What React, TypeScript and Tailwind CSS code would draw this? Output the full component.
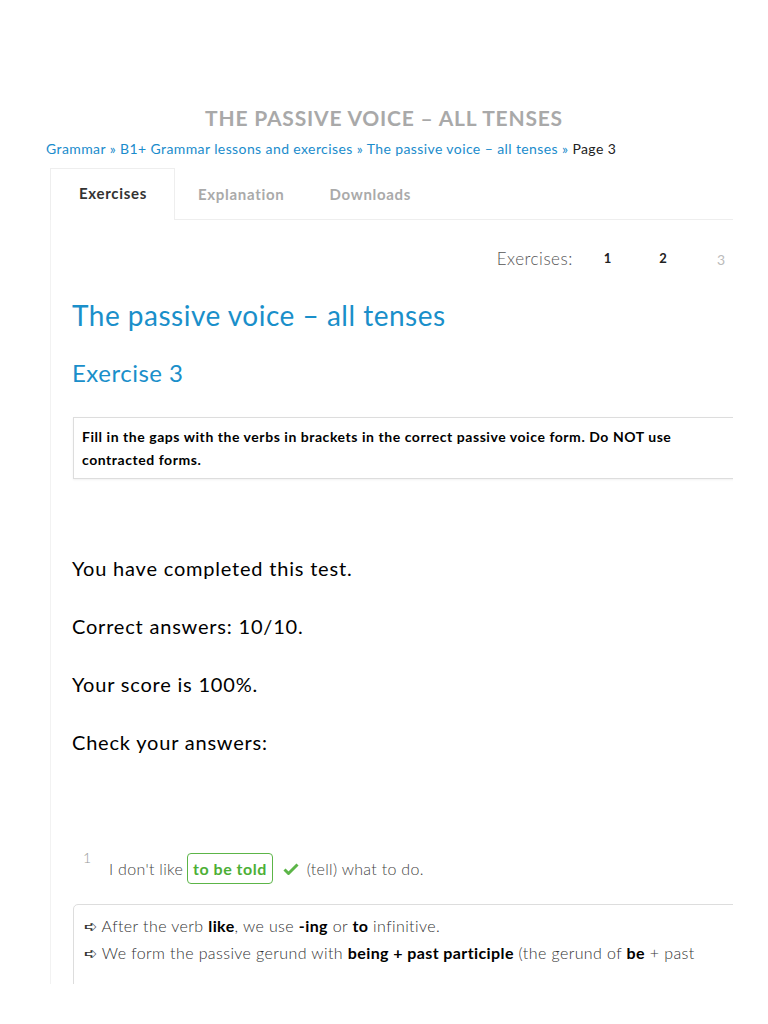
import React from "react";

const font = { fontFamily: "Lato, 'Open Sans', sans-serif" };

export default function App() {
  return (
    <div className="w-[768px] h-[1024px] bg-white overflow-hidden text-[#222]" style={font}>
      <div className="h-[984px] overflow-hidden pt-[105px]">
        <h2 className="text-center text-[21px] leading-[26px] font-bold text-[#a9a9a9] tracking-[0.8px]">
          THE PASSIVE VOICE – ALL TENSES
        </h2>
        <div className="mt-[9px] pl-[46px] text-[14px] leading-[18px] text-[#1a8ccc] tracking-[0.4px]">
          <span>Grammar</span> » <span>B1+ Grammar lessons and exercises</span> »{" "}
          <span>The passive voice – all tenses</span> » <span className="text-[#222]">Page 3</span>
        </div>
        <div className="ml-[50px] w-[683px] overflow-hidden mt-[10px]">
          {/* tabs */}
          <div className="flex h-[52px]">
            <div className="w-[125px] border border-b-0 border-[#eeeeee] pt-[14px] pl-[28px] text-[15px] leading-[20px] font-bold text-[#333] tracking-[0.7px]">
              Exercises
            </div>
            <div className="flex-1 flex items-start pt-[16px] border-b border-[#eeeeee] text-[15px] leading-[20px] font-bold text-[#aaaaaa] tracking-[0.7px]">
              <span className="ml-[23px]">Explanation</span>
              <span className="ml-[45px]">Downloads</span>
            </div>
          </div>
          {/* panel */}
          <div className="border-l border-[#f2f2f2] pb-[40px]">
            <div className="flex justify-end items-center h-[74px] pt-[4px] pr-[8px]">
              <span className="text-[17px] font-light text-[#555] tracking-[0.5px]">Exercises:</span>
              <span className="ml-[31px] text-[13px] font-bold text-[#222]">1</span>
              <span className="ml-[48px] text-[13px] font-bold text-[#222]">2</span>
              <span className="ml-[50px] text-[14px] text-[#bbbbbb]">3</span>
            </div>
            <h1 className="ml-[21px] mt-[4px] text-[28px] leading-[34px] text-[#1a8fca] tracking-[0.5px]">
              The passive voice – all tenses
            </h1>
            <h3 className="ml-[21px] mt-[26px] text-[24px] leading-[30px] text-[#1a8fca] tracking-[0.5px]">Exercise 3</h3>
            <div className="ml-[22px] mt-[29px] w-[700px] border border-[#dddddd] shadow-[0_1px_2px_rgba(0,0,0,0.06)] px-[8px] py-[7px] text-[14px] leading-[23px] font-bold text-black tracking-[0.55px]">
              Fill in the gaps with the verbs in brackets in the correct passive voice form. Do NOT use
              <br />
              contracted forms.
            </div>
            <div className="ml-[21px] mt-[77px] text-[20px] leading-[24px] text-black flex flex-col gap-[34px] tracking-[0.8px]">
              <p>You have completed this test.</p>
              <p>Correct answers: 10/10.</p>
              <p>Your score is 100%.</p>
              <p>Check your answers:</p>
            </div>
            <div className="ml-[32px] mt-[99px] flex items-center text-[16px] text-[#444] font-light tracking-[0.3px]">
              <span className="text-[14px] text-[#999] self-start -mt-[6px] w-[26px]">1</span>
              <span>I don't like</span>
              <span className="ml-[4px] inline-flex items-center h-[31px] px-[5px] border border-[#5cb548] rounded-[4px] text-[#4caf36] font-bold tracking-[0.5px]">
                to be told
              </span>
              <svg className="ml-[10px]" width="16" height="14" viewBox="0 0 16 14">
                <path d="M1.5 7.5 L5.5 11.5 L14.5 2.5" stroke="#5cb548" strokeWidth="3" fill="none" strokeLinejoin="round" />
              </svg>
              <span className="ml-[8px]">(tell) what to do.</span>
            </div>
            <div className="ml-[22px] mt-[20px] w-[700px] h-[120px] border border-[#dddddd] rounded-tl-[5px] px-[10px] pt-[7px] text-[16px] leading-[27px] font-light text-[#333] tracking-[0.4px]">
              <p>
                ➪ After the verb <b className="font-bold text-black">like</b>, we use{" "}
                <b className="font-bold text-black">-ing</b> or <b className="font-bold text-black">to</b> infinitive.
              </p>
              <p>
                ➪ We form the passive gerund with <b className="font-bold text-black">being + past participle</b> (the
                gerund of <b className="font-bold text-black">be</b> + past
              </p>
            </div>
          </div>
        </div>
      </div>
    </div>
  );
}
